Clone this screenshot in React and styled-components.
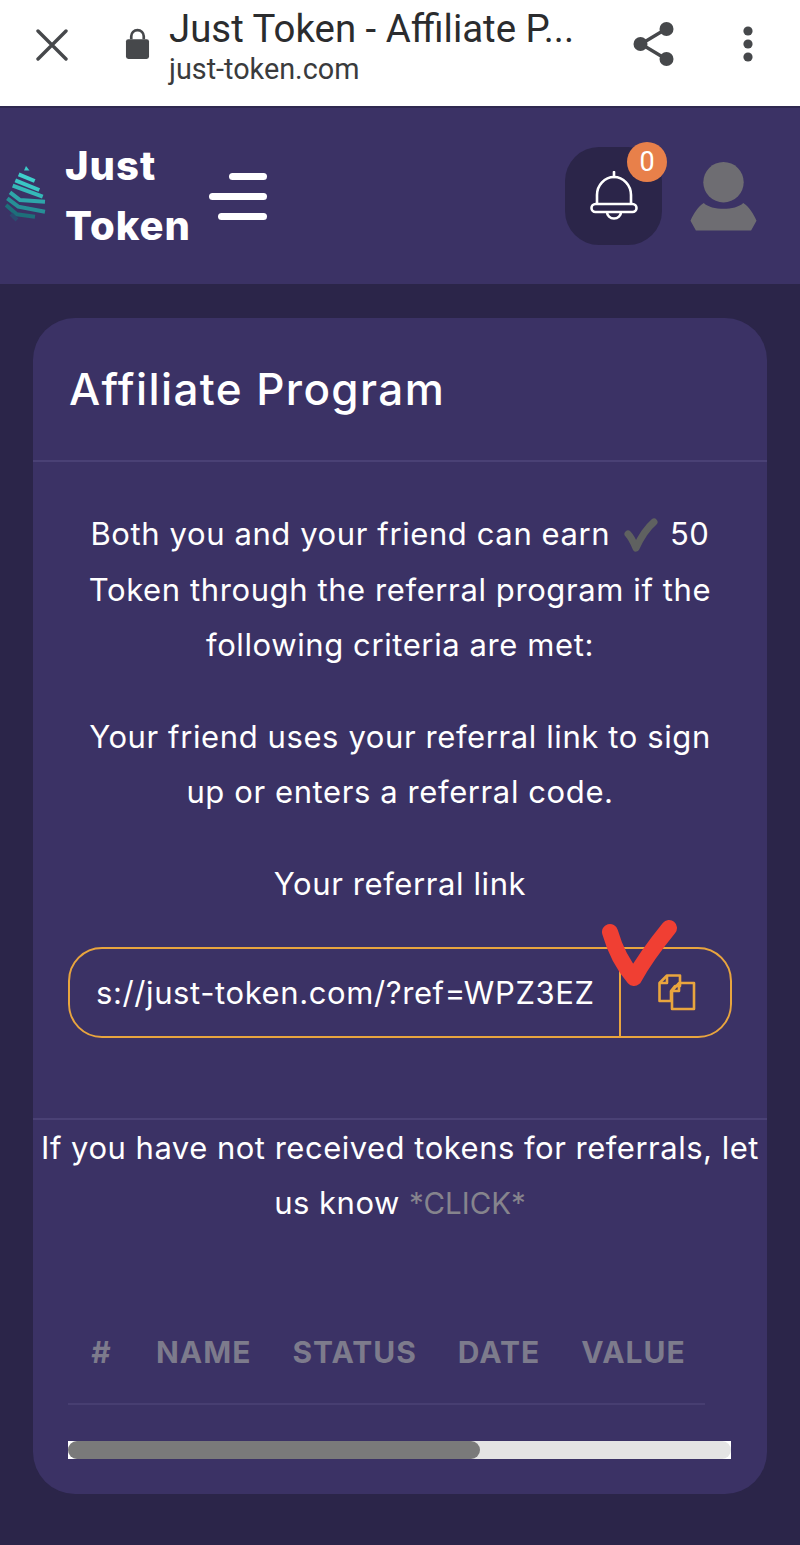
import styled, { createGlobalStyle } from 'styled-components'

export default function App() {
	return (
		<>
			<GlobalStyle />
			<BrowserBar>
				<CloseIcon />
				<LockIcon />
				<AddressText>
					<PageTitle>Just Token - Affiliate P...</PageTitle>
					<PageHost>just-token.com</PageHost>
				</AddressText>
				<ShareIcon />
				<MoreIcon />
			</BrowserBar>
			<Header>
				<LogoIcon />
				<Brand>
					Just
					<br /> Token
				</Brand>
				<Burger>
					<BurgerLine $width={38} />
					<BurgerLine $width={58} />
					<BurgerLine $width={49} />
				</Burger>
				<HeaderRight>
					<BellButton>
						<BellIcon />
						<Badge>0</Badge>
					</BellButton>
					<UserIcon />
				</HeaderRight>
			</Header>
			<Main>
				<Card>
					<CardHeader>
						<CardTitle>Affiliate Program</CardTitle>
					</CardHeader>
					<Intro>
						<Paragraph>
							Both you and your friend can earn <TokenCheck /> 50
							<br /> Token through the referral program if the
							<br /> following criteria are met:
						</Paragraph>
						<Paragraph>
							Your friend uses your referral link to sign
							<br /> up or enters a referral code.
						</Paragraph>
						<Paragraph>Your referral link</Paragraph>
					</Intro>
					<LinkField>
						<LinkValue>s://just-token.com/?ref=WPZ3EZ</LinkValue>
						<CopyButton>
							<CopyIcon />
							<RedCheck />
						</CopyButton>
					</LinkField>
					<Notice>
						If you have not received tokens for referrals, let
						<br /> us know <NoticeLink>*CLICK*</NoticeLink>
					</Notice>
					<TableHead>
						<HeadCell>#</HeadCell>
						<HeadCell>Name</HeadCell>
						<HeadCell>Status</HeadCell>
						<HeadCell>Date</HeadCell>
						<HeadCell>Value</HeadCell>
					</TableHead>
					<ScrollTrack>
						<ScrollRail>
							<ScrollThumb $percent={62.2} />
						</ScrollRail>
					</ScrollTrack>
				</Card>
			</Main>
		</>
	)
}

const CloseIcon = () => (
	<CloseSvg viewBox='0 0 32 32'>
		<path d='M2 2 L30 30 M30 2 L2 30' stroke='#46484b' strokeWidth='3.4' strokeLinecap='round' fill='none' />
	</CloseSvg>
)

const LockIcon = () => (
	<LockSvg viewBox='0 0 26 32'>
		<path d='M6.5 11 V8 a6.5 6.5 0 0 1 13 0 V11' stroke='#46484b' strokeWidth='2.8' fill='none' />
		<rect x='1' y='11' width='24' height='20.5' rx='2.5' fill='#46484b' />
	</LockSvg>
)

const ShareIcon = () => (
	<ShareSvg viewBox='0 0 42 46'>
		<path d='M33 8 L8 23 L33 38' stroke='#46484b' strokeWidth='3.4' fill='none' />
		<circle cx='33.5' cy='8' r='7' fill='#46484b' />
		<circle cx='7.5' cy='23' r='7' fill='#46484b' />
		<circle cx='33.5' cy='38' r='7' fill='#46484b' />
	</ShareSvg>
)

const MoreIcon = () => (
	<MoreSvg viewBox='0 0 10 36'>
		<circle cx='5' cy='5' r='4.6' fill='#46484b' />
		<circle cx='5' cy='18' r='4.6' fill='#46484b' />
		<circle cx='5' cy='31' r='4.6' fill='#46484b' />
	</MoreSvg>
)

const LogoIcon = () => (
	<LogoSvg viewBox='0 0 42 60' fill='none' strokeWidth='4'>
		<path d='M21 0 L24.5 4.5 L19 4.5 Z' fill='#3cc9c8' />
		<path d='M13.7 8.3 L29.7 15' stroke='#3fd0cc' />
		<path d='M10.3 14.3 L34.3 24' stroke='#3ac6c4' />
		<path d='M7.7 19.7 L37.7 30.7' stroke='#35b8b8' />
		<path d='M5 26.3 L15 34 L40 35.7' stroke='#2ea6aa' />
		<path d='M2.3 32.3 L13.3 40.7 L40 45.7' stroke='#268f96' />
		<path d='M1 39 L11.7 48.3 L30 50.7' stroke='#1d6f7a' />
		<path d='M6 48 L12 54' stroke='#2b4a70' />
	</LogoSvg>
)

const BellIcon = () => (
	<BellSvg viewBox='0 0 48 50' fill='none' stroke='#fff' strokeWidth='2.6' strokeLinejoin='round'>
		<path d='M24 1 V6' strokeLinecap='round' />
		<path d='M7 33 V24 a17 18 0 0 1 34 0 V33' />
		<rect x='1.5' y='33' width='45' height='8' rx='4' />
		<path d='M17 41 a7 6.5 0 0 0 14 0' />
	</BellSvg>
)

const UserIcon = () => (
	<UserSvg viewBox='0 0 68 70'>
		<circle cx='34' cy='21' r='20.5' fill='#6e6d72' />
		<path d='M14 42 C22 50 46 50 54 42 C60 46 64 52 67.5 60 L62 70 H6 L0.5 60 C4 52 8 46 14 42 Z' fill='#6e6d72' />
	</UserSvg>
)

const TokenCheck = () => (
	<CheckSvg viewBox='0 0 36 36'>
		<path d='M5 17 C8 20 10 24 13 31 C18 20 24 11 31 5' stroke='#5f6160' strokeWidth='7' strokeLinecap='round' strokeLinejoin='round' fill='none' />
	</CheckSvg>
)

const CopyIcon = () => (
	<CopySvg viewBox='0 0 38 38' fill='none' stroke='#e9a53e' strokeWidth='2.6' strokeLinejoin='round'>
		<path d='M9 1.5 H22 V12 H17 L13 17 V27 H1.5 V9 Z' />
		<path d='M1.5 9 H9 V1.5' />
		<path d='M21 9 H36 V35 H14 V17 Z' />
		<path d='M14 17 H21 V9' />
	</CopySvg>
)

const RedCheck = () => (
	<RedCheckSvg viewBox='0 0 76 70'>
		<path d='M8 12 C12 26 20 44 32 58 C42 40 54 24 67 8' stroke='#f03f33' strokeWidth='16' strokeLinecap='round' strokeLinejoin='round' fill='none' />
	</RedCheckSvg>
)

const GlobalStyle = createGlobalStyle`
	html, body {
		margin: 0;
		padding: 0;
		background: #2b2549;
		font-family: "Inter", "Noto Sans", sans-serif;
	}
`

const BrowserBar = styled.div`
	height: 106px;
	box-sizing: border-box;
	padding: 10px 43px 0 36px;
	background: #fff;
	display: flex;
	align-items: flex-start;
	font-family: "Roboto", sans-serif;
`
const CloseSvg = styled.svg`
	width: 32px;
	height: 32px;
	margin-top: 19px;
`
const LockSvg = styled.svg`
	width: 25px;
	height: 32px;
	margin: 18px 0 0 57px;
`
const AddressText = styled.div`
	width: 465px;
	margin-left: 19px;
	flex: none;
	color: #2b2c2e;
`
const PageTitle = styled.div`
	font-size: 38.4px;
	line-height: 38px;
`
const PageHost = styled.div`
	font-size: 28.8px;
	line-height: 32px;
	margin-top: 5px;
	color: #3a3b3d;
`
const ShareSvg = styled.svg`
	width: 42px;
	height: 46px;
	margin-top: 11px;
	margin-left: -1px;
`
const MoreSvg = styled.svg`
	width: 10px;
	height: 36px;
	margin-top: 16px;
	margin-left: 68px;
`

const Header = styled.header`
	height: 178px;
	box-sizing: border-box;
	border-top: 2px solid #2f2850;
	padding-right: 43px;
	background: #3b3265;
	display: flex;
	align-items: center;
`
const LogoSvg = styled.svg`
	width: 42px;
	height: 60px;
	margin: 0 0 0 5px;
	flex: none;
`
const Brand = styled.div`
	margin-left: 18px;
	color: #fff;
	font-size: 40px;
	line-height: 60px;
	font-weight: 800;
	letter-spacing: 1px;
`
const Burger = styled.div`
	width: 58px;
	margin-left: 18px;
	display: flex;
	flex-direction: column;
	align-items: flex-end;
	gap: 13px;
`
const BurgerLine = styled.span`
	width: ${(props) => props.$width}px;
	height: 7px;
	border-radius: 4px;
	background: #fff;
`
const HeaderRight = styled.div`
	margin-left: auto;
	display: flex;
	align-items: center;
	gap: 28px;
`
const BellButton = styled.div`
	position: relative;
	width: 97px;
	height: 98px;
	border-radius: 34px;
	background: #2b2549;
	display: flex;
	align-items: center;
	justify-content: center;
`
const BellSvg = styled.svg`
	width: 48px;
	height: 50px;
`
const Badge = styled.span`
	position: absolute;
	top: -5px;
	right: -5px;
	width: 40px;
	height: 40px;
	border-radius: 50%;
	background: #e8804a;
	color: #fff;
	font-size: 27px;
	line-height: 40px;
	text-align: center;
	font-family: "Roboto", sans-serif;
`
const UserSvg = styled.svg`
	width: 67px;
	height: 70px;
`

const Main = styled.main`
	padding: 34px 33px 51px;
`
const Card = styled.section`
	height: 1176px;
	box-sizing: border-box;
	border-radius: 42px;
	background: #3b3265;
	color: #fff;
`
const CardHeader = styled.div`
	height: 144px;
	box-sizing: border-box;
	padding: 41px 36px 0;
	border-bottom: 2px solid #4a4175;
`
const CardTitle = styled.h1`
	margin: 0;
	font-size: 44px;
	line-height: 60px;
	font-weight: 500;
	letter-spacing: 1.4px;
`
const Intro = styled.div`
	padding-top: 44px;
	display: flex;
	flex-direction: column;
	gap: 36px;
`
const Paragraph = styled.p`
	margin: 0;
	font-size: 31px;
	line-height: 55.5px;
	letter-spacing: 0.6px;
	text-align: center;
`
const CheckSvg = styled.svg`
	width: 36px;
	height: 36px;
	margin: 0 2px 0 3px;
	vertical-align: -8px;
`
const LinkField = styled.div`
	height: 91px;
	box-sizing: border-box;
	margin: 36px 35px 0;
	border: 2px solid #e9a53e;
	border-radius: 34px;
	display: flex;
`
const LinkValue = styled.div`
	flex: 1;
	padding-left: 26px;
	font-size: 31px;
	line-height: 87px;
	letter-spacing: 0.6px;
	white-space: nowrap;
	overflow: hidden;
`
const CopyButton = styled.div`
	position: relative;
	width: 109px;
	flex: none;
	border-left: 2px solid #e9a53e;
	display: flex;
	align-items: center;
	justify-content: center;
`
const CopySvg = styled.svg`
	width: 38px;
	height: 38px;
	margin-left: 2px;
`
const RedCheckSvg = styled.svg`
	position: absolute;
	top: -29px;
	left: -19px;
	width: 76px;
	height: 70px;
`
const Notice = styled.p`
	margin: 80px 0 0;
	border-top: 2px solid #4a4175;
	font-size: 31px;
	line-height: 55px;
	letter-spacing: 0.5px;
	text-align: center;
	white-space: nowrap;
`
const NoticeLink = styled.span`
	color: #86848d;
	font-size: 29.5px;
	letter-spacing: 0;
`
const TableHead = styled.div`
	height: 76px;
	box-sizing: border-box;
	margin: 98px 62px 0 35px;
	padding-left: 20px;
	border-bottom: 2px solid #473e71;
	display: flex;
	gap: 41px;
`
const HeadCell = styled.div`
	min-width: 27px;
	color: #7d7b8c;
	font-size: 30px;
	line-height: 46px;
	font-weight: 700;
	letter-spacing: 1px;
	text-align: center;
	text-transform: uppercase;
`
const ScrollTrack = styled.div`
	height: 18px;
	margin: 36px 36px 0 35px;
	background: #fff;
`
const ScrollRail = styled.div`
	height: 100%;
	border-radius: 9px;
	background: #e4e4e4;
`
const ScrollThumb = styled.div`
	width: ${(props) => props.$percent}%;
	height: 100%;
	border-radius: 9px;
	background: #7a7a7a;
`
